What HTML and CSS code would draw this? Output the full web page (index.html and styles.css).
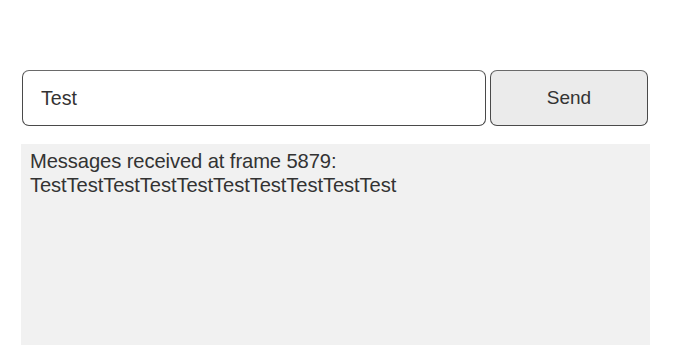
FILE: index.html
```html
<!DOCTYPE html>
<html>
<head>
<meta charset="utf-8">
<link rel="stylesheet" href="styles.css">
</head>
<body>
<div class="page">
  <form class="composer" onsubmit="return false">
    <input class="field" type="text" value="Test">
    <button class="send" type="button">Send</button>
  </form>
  <div class="log">Messages received at frame 5879:<br>TestTestTestTestTestTestTestTestTestTest</div>
</div>
</body>
</html>
```
FILE: styles.css
```css
html, body {
  margin: 0;
  padding: 0;
  background: #ffffff;
  overflow: hidden;
}
.page {
  padding: 70px 0 0 21px;
  font-family: "Liberation Sans", Arial, Helvetica, sans-serif;
  color: #333333;
}
.composer {
  display: flex;
  gap: 4px;
  margin: 0 0 18px 1px;
  height: 56px;
}
.field {
  box-sizing: border-box;
  width: 464px;
  height: 56px;
  margin: 0;
  padding: 0 0 0 18px;
  border: 1px solid #4a4a4a;
  border-top-color: #6a6a6a;
  border-radius: 7px;
  background: #ffffff;
  font-family: inherit;
  font-size: 19.6px;
  color: #333333;
  outline: none;
}
.send {
  box-sizing: border-box;
  width: 158px;
  height: 56px;
  margin: 0;
  padding: 0;
  border: 1px solid #4a4a4a;
  border-top-color: #6a6a6a;
  border-radius: 7px;
  background: #ebebeb;
  font-family: inherit;
  font-size: 19px;
  color: #333333;
}
.log {
  box-sizing: border-box;
  width: 629px;
  height: 201px;
  padding: 6px 9px 0;
  background: #f1f1f1;
  font-size: 20.2px;
  line-height: 23.5px;
  color: #333333;
  letter-spacing: -0.1px;
}
```
